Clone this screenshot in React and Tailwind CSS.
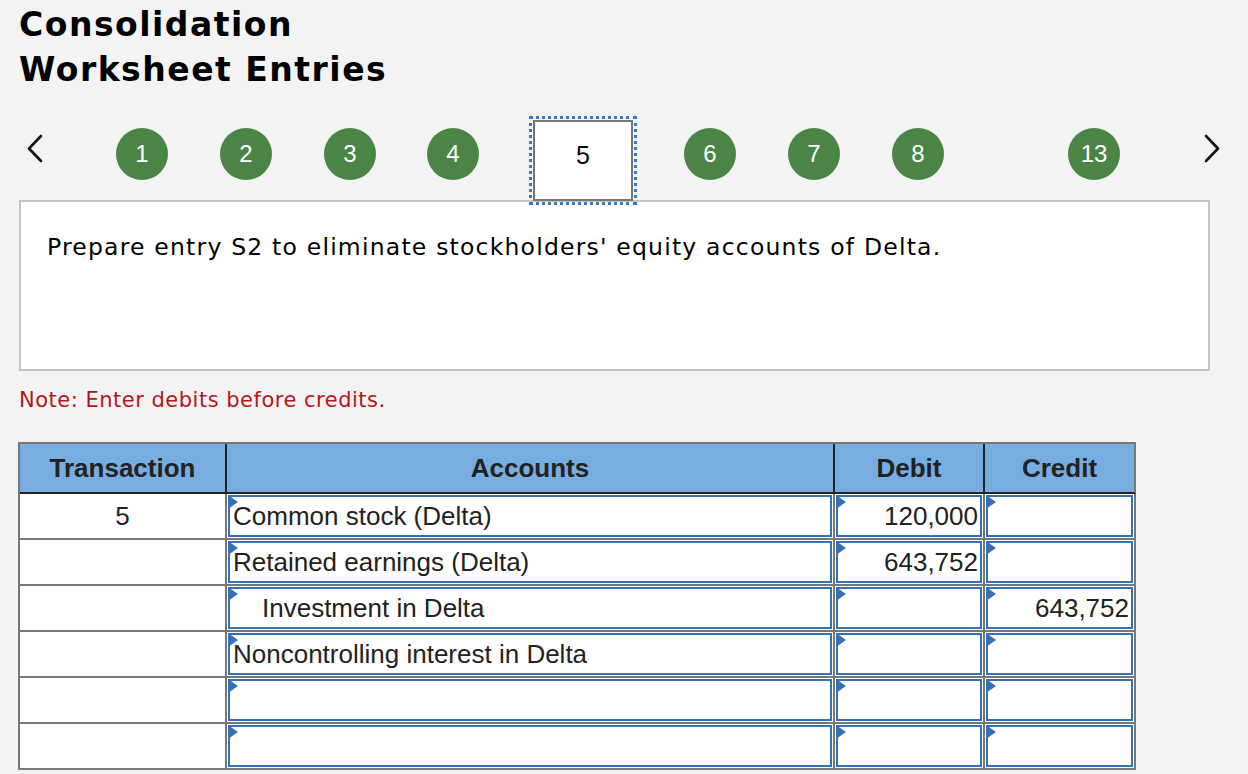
import React from 'react';

const rows = [
  { tx: '5', account: 'Common stock (Delta)', indent: false, debit: '120,000', credit: '' },
  { tx: '', account: 'Retained earnings (Delta)', indent: false, debit: '643,752', credit: '' },
  { tx: '', account: 'Investment in Delta', indent: true, debit: '', credit: '643,752' },
  { tx: '', account: 'Noncontrolling interest in Delta', indent: false, debit: '', credit: '' },
  { tx: '', account: '', indent: false, debit: '', credit: '' },
  { tx: '', account: '', indent: false, debit: '', credit: '' },
];

function Circle({ n, className = '' }) {
  return (
    <div
      className={`w-[52px] h-[52px] mt-[8px] rounded-full bg-[#4a8545] text-white flex items-center justify-center text-[24px] shrink-0 ${className}`}
    >
      {n}
    </div>
  );
}

function Chevron({ dir }) {
  return (
    <svg width="18" height="29" viewBox="0 0 18 29" fill="none" stroke="#111" strokeWidth="2.6" strokeLinecap="round" strokeLinejoin="round">
      {dir === 'left'
        ? <polyline points="15,2 3,14.5 15,27" />
        : <polyline points="3,2 15,14.5 3,27" />}
    </svg>
  );
}

function InputCell({ children, align = 'left', indent = false, last = false }) {
  return (
    <div className={`h-[46px] border-b-2 ${last ? '' : 'border-r-2'} border-[#777] p-[1px]`}>
      <div className="relative h-full border-2 border-[#3571b8] bg-white flex items-center">
        <span className="absolute left-[-2px] top-[-2px] w-0 h-0 border-y-[7px] border-y-transparent border-l-[10px] border-l-[#3571b8]" />
        <span
          className={`w-full ${align === 'right' ? 'text-right pr-[2px]' : indent ? 'pl-[32px]' : 'pl-[3px]'}`}
        >
          {children}
        </span>
      </div>
    </div>
  );
}

export default function App() {
  return (
    <div className="min-h-[774px] bg-[#f3f3f3] text-[#222]" style={{ fontFamily: '"Liberation Sans", Arial, sans-serif' }}>
      <div className="pl-[19px] pt-[2px]">
        <h1 className="font-bold text-[33px] leading-[45px] tracking-[1.5px] text-black" style={{ fontFamily: '"DejaVu Sans", Verdana, sans-serif' }}>
          Consolidation
          <br />
          Worksheet Entries
        </h1>
      </div>

      <div className="flex items-start h-[80px] mt-[28px]">
        <div className="ml-[26px] mt-[14px]"><Chevron dir="left" /></div>
        <Circle n="1" className="ml-[72px]" />
        <Circle n="2" className="ml-[52px]" />
        <Circle n="3" className="ml-[52px]" />
        <Circle n="4" className="ml-[51px]" />
        <div className="ml-[54px] w-[100px] h-[81px] bg-white border-2 border-[#777] outline-[3px] outline-dotted outline-[#3a78c3] outline-offset-[1px] flex items-start justify-center pt-[15px] text-[25px] text-black shrink-0">
          5
        </div>
        <Circle n="6" className="ml-[51px]" />
        <Circle n="7" className="ml-[52px]" />
        <Circle n="8" className="ml-[52px]" />
        <Circle n="13" className="ml-[124px]" />
        <div className="ml-[83px] mt-[14px]"><Chevron dir="right" /></div>
      </div>

      <div className="ml-[19px] w-[1191px] h-[171px] bg-white border-2 border-[#c4c4c4] pl-[26px] pt-[31px]">
        <p className="text-[23.5px] leading-[28px] tracking-[1.2px] text-black" style={{ fontFamily: '"DejaVu Sans", Verdana, sans-serif' }}>
          Prepare entry S2 to eliminate stockholders' equity accounts of Delta.
        </p>
      </div>

      <p className="ml-[19px] mt-[15px] text-[21px] leading-[28px] tracking-[0.5px] text-[#b5161c]" style={{ fontFamily: '"DejaVu Sans", Verdana, sans-serif' }}>
        Note: Enter debits before credits.
      </p>

      <div className="ml-[18px] mt-[28px] w-[1118px] border-t-2 border-l-2 border-[#777] grid grid-cols-[207px_608px_150px_151px] text-[26px] bg-white">
        <div className="h-[50px] bg-[#78ade1] border-r-2 border-r-[#222] border-b-2 border-b-[#222] flex items-center justify-center font-bold">Transaction</div>
        <div className="h-[50px] bg-[#78ade1] border-r-2 border-r-[#222] border-b-2 border-b-[#222] flex items-center justify-center font-bold">Accounts</div>
        <div className="h-[50px] bg-[#78ade1] border-r-2 border-r-[#222] border-b-2 border-b-[#222] flex items-center justify-center font-bold">Debit</div>
        <div className="h-[50px] bg-[#78ade1] border-r-2 border-r-[#777] border-b-2 border-b-[#222] flex items-center justify-center font-bold">Credit</div>

        {rows.map((r, i) => (
          <React.Fragment key={i}>
            <div className="h-[46px] border-r-2 border-b-2 border-[#777] flex items-center justify-center">{r.tx}</div>
            <InputCell indent={r.indent}>{r.account}</InputCell>
            <InputCell align="right">{r.debit}</InputCell>
            <div className="border-r-2 border-[#777]">
              <InputCell align="right" last>{r.credit}</InputCell>
            </div>
          </React.Fragment>
        ))}
      </div>
    </div>
  );
}
